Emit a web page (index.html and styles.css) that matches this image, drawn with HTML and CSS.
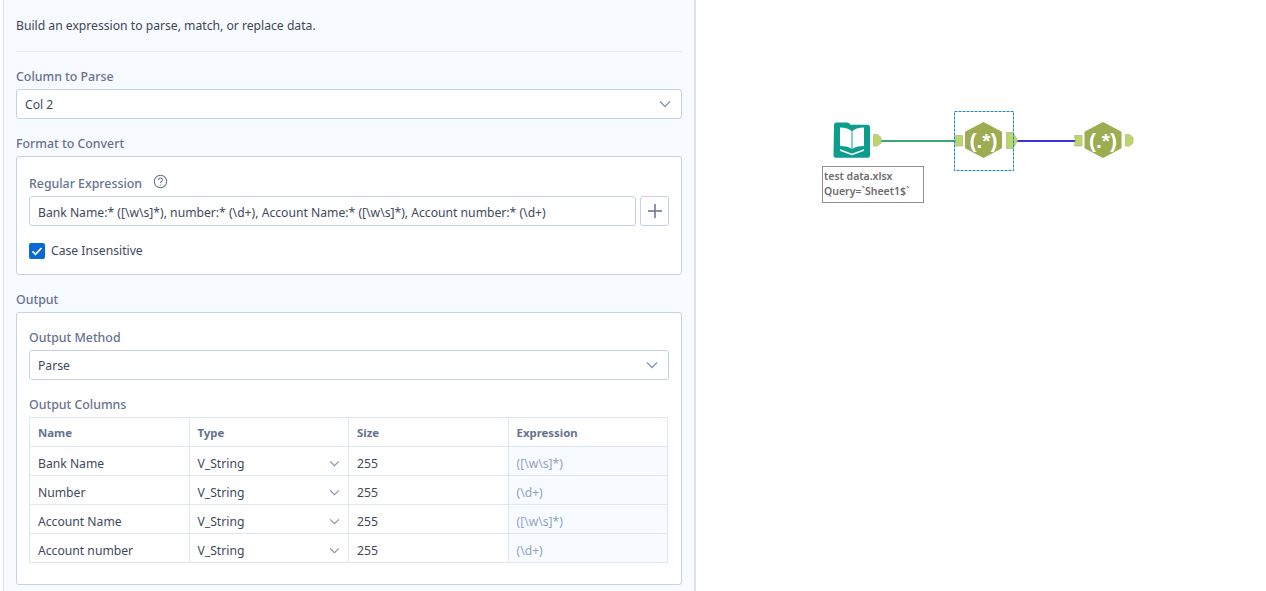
FILE: index.html
```html
<!DOCTYPE html>
<html lang="en">
<head>
<meta charset="utf-8">
<title>RegEx Tool</title>
<link rel="stylesheet" href="styles.css">
</head>
<body>
<div class="app">
  <aside class="panel">
    <p class="intro">Build an expression to parse, match, or replace data.</p>
    <hr class="divider">
    <div class="label label-first">Column to Parse</div>
    <div class="select"><span>Col 2</span><svg class="chev" viewBox="0 0 12 8"><path d="M1 1.5l5 5 5-5"/></svg></div>
    <div class="label label-section">Format to Convert</div>
    <section class="card card-format">
      <div class="label label-help">Regular Expression
        <svg class="help" viewBox="0 0 16 16"><circle cx="8" cy="8" r="6.6"/><path d="M6 6.3a2 2 0 1 1 3.1 1.7c-.7.4-1.1.8-1.1 1.6"/><path d="M8 11.3v.9"/></svg>
      </div>
      <div class="regex-row">
        <div class="input">Bank Name:* ([\w\s]*), number:* (\d+), Account Name:* ([\w\s]*), Account number:* (\d+)</div>
        <button class="add" type="button"><svg viewBox="0 0 14 14"><path d="M7 0v14M0 7h14"/></svg></button>
      </div>
      <label class="check">
        <span class="box"><svg viewBox="0 0 16 16"><path d="M3.500 8.300l3 3 6-6.300"/></svg></span>
        <span class="check-text">Case Insensitive</span>
      </label>
    </section>
    <div class="label label-output">Output</div>
    <section class="card card-output">
      <div class="label label-method">Output Method</div>
      <div class="select"><span>Parse</span><svg class="chev" viewBox="0 0 12 8"><path d="M1 1.5l5 5 5-5"/></svg></div>
      <div class="label label-cols">Output Columns</div>
      <table class="grid">
        <thead>
          <tr><th>Name</th><th>Type</th><th>Size</th><th>Expression</th></tr>
        </thead>
        <tbody>
          <tr><td>Bank Name</td><td><div class="type">V_String<svg class="chev" viewBox="0 0 12 8"><path d="M1 1.5l5 5 5-5"/></svg></div></td><td>255</td><td class="expr">([\w\s]*)</td></tr>
          <tr><td>Number</td><td><div class="type">V_String<svg class="chev" viewBox="0 0 12 8"><path d="M1 1.5l5 5 5-5"/></svg></div></td><td>255</td><td class="expr">(\d+)</td></tr>
          <tr><td>Account Name</td><td><div class="type">V_String<svg class="chev" viewBox="0 0 12 8"><path d="M1 1.5l5 5 5-5"/></svg></div></td><td>255</td><td class="expr">([\w\s]*)</td></tr>
          <tr><td>Account number</td><td><div class="type">V_String<svg class="chev" viewBox="0 0 12 8"><path d="M1 1.5l5 5 5-5"/></svg></div></td><td>255</td><td class="expr">(\d+)</td></tr>
        </tbody>
      </table>
    </section>
  </aside>
  <main class="canvas">
    <svg class="flow" viewBox="0 0 570 591" width="570" height="591">
      <g transform="translate(-696 0)">
        <path class="wire-green" d="M880 141H957"/>
        <path class="wire-blue" d="M1016 141H1079"/>
        <path class="book-bg" d="M834 125a2.500 2.500 0 0 1 2.500-2.500h11a2 2 0 0 1 1.500.7l1.500 1.600h17a2.500 2.500 0 0 1 2.500 2.500v28a2.500 2.500 0 0 1-2.500 2.500h-31.500a2.500 2.500 0 0 1-2.500-2.500z"/>
        <path class="book-page" d="M852 131.500c-2.700-2.800-6.500-4-12-4v18.500c5.500 0 9.300 1 12 3.300 2.700-2.300 6.500-3.300 12-3.300v-18.500c-5.500 0-9.300 1.200-12 4z"/>
        <path class="book-spine" d="M852 131.500v17.500"/>
        <path class="book-foot" d="M840 150l12 4.500 12-4.500"/>
        <path class="anchor" d="M873.500 134.500h4l3.500 3v5.500l-3.500 3h-4z"/>
        <path class="anchor" d="M955 135.500h7.500v10.500H955l.8-5.200z"/>
        <polygon class="hex" points="983.500,122.500 1001.500,132 1001.500,148 983.500,157.500 965.500,148 965.500,132"/>
        <text class="hex-text" x="983.500" y="147.500">(.*)</text>
        <path class="anchor" d="M1006.500 132.500h6.500l4.500 8-4.500 8h-6.500z"/>
        <path class="anchor" d="M1074.500 135.500h7.500v10.500h-7.500l.8-5.200z"/>
        <polygon class="hex" points="1103,122.500 1121,132 1121,148 1103,157.500 1085,148 1085,132"/>
        <text class="hex-text" x="1103" y="147.500">(.*)</text>
        <path class="anchor" d="M1125.500 134.500h4l3.500 3v5.500l-3.500 3h-4z"/>
        <rect class="selection" x="954.500" y="111.500" width="59" height="59"/>
      </g>
    </svg>
    <div class="note">test data.xlsx<br>Query=`Sheet1$`</div>
  </main>
</div>
</body>
</html>
```
FILE: styles.css
```css
* { box-sizing: border-box; }
html, body { margin: 0; height: 591px; overflow: hidden; background: #fff; }
body { font-family: "Noto Sans", "Open Sans", sans-serif; font-size: 12.17px; color: #404a5c; }
.app { display: flex; height: 591px; padding-left: 3px; }
.panel {
  width: 693px; height: 591px; flex: none; overflow: hidden;
  background: #f7faff;
  border-left: 1px solid #dbe4f3; border-right: 2px solid #dbe4f3;
  padding: 0 12px;
}
.intro { margin: 0; padding-top: 17px; height: 51px; line-height: 17px; color: #3d4656; }
.divider { margin: 0; border: 0; border-top: 1px solid #e8edf5; height: 1px; }
.label { font-weight: 500; font-size: 12.35px; color: #66728f; line-height: 17px; }
.label-first { margin-top: 16px; }
.label-section { margin-top: 16px; }
.label-help { margin-top: 0; display: flex; align-items: center; gap: 0; }
.label-output { margin-top: 16px; }
.label-method { margin-top: 0; }
.label-cols { margin-top: 16px; }
.select, .input {
  background: #fff; border: 1px solid #c5d1e6; border-radius: 3px;
  height: 30px; line-height: 29px; color: #404a5c;
}
.select { display: flex; align-items: center; justify-content: space-between; padding: 1px 10px 0 8px; margin-top: 4px; }
.select .chev { margin-top: -1px; }
.chev { width: 12px; height: 8px; fill: none; stroke: #8a97b3; stroke-width: 1.4; }
.card {
  background: #fff; border: 1px solid #c5d1e6; border-radius: 3px; padding: 0 12px;
}
.card-format { height: 119px; margin-top: 4px; padding-top: 18px; }
.card-output { height: 273px; margin-top: 4px; padding-top: 16px; }
.help { width: 15px; height: 15px; margin-left: 11px; margin-top: -4px; fill: none; stroke: #66728f; stroke-width: 1.1; }
.regex-row { display: flex; gap: 4px; margin-top: 4px; }
.input { flex: 1; padding: 1px 8px 0; white-space: nowrap; overflow: hidden; }
.add {
  width: 29px; height: 30px; flex: none; padding: 0; display: flex; align-items: center; justify-content: center;
  background: #fff; border: 1px solid #c5d1e6; border-radius: 3px;
}
.add svg { width: 14px; height: 14px; fill: none; stroke: #66728f; stroke-width: 1.5; }
.check { display: flex; align-items: center; gap: 6px; margin-top: 16px; line-height: 16px; }
.check-text { padding-top: 1px; }
.box { width: 16px; height: 16px; background: #0b69d4; border-radius: 2px; display: block; }
.box svg { display: block; width: 16px; height: 16px; fill: none; stroke: #fff; stroke-width: 1.8; }
.card-output .select { margin-top: 4px; }
.grid { width: 639px; margin-top: 4px; border-collapse: collapse; table-layout: fixed; }
.grid th, .grid td { border: 1px solid #e1e7f2; padding: 0 8px; height: 29px; text-align: left; font-weight: 400; }
.grid td { padding-top: 5px; }
.grid th { font-weight: 700; font-size: 11.4px; color: #66728f; }
.grid td.expr { background: #f7faff; color: #94a3c2; }
.type { display: flex; align-items: center; justify-content: space-between; padding-right: 0; }
.type .chev { width: 11px; height: 7px; }
.canvas { flex: 1; position: relative; overflow: hidden; background: #fff; }
.flow { position: absolute; left: 0; top: 0; }
.wire-green { stroke: #3ba768; stroke-width: 2; fill: none; }
.wire-blue { stroke: #3636e0; stroke-width: 2; fill: none; }
.book-bg { fill: #0d9d8c; }
.book-page { fill: #fff; }
.book-spine { stroke: #0d9d8c; stroke-width: 1; fill: none; }
.book-foot { stroke: #fff; stroke-width: 1.5; fill: none; }
.anchor { fill: #bcd66a; stroke: #a8b58a; stroke-width: 0.7; }
.hex { fill: #9bad50; stroke: #9bad50; stroke-width: 1; stroke-linejoin: round; }
.hex-text { fill: #fff; font-family: "Liberation Sans", sans-serif; font-weight: 700; font-size: 21px; text-anchor: middle; }
.selection { fill: none; stroke: #1a86d8; stroke-width: 1; stroke-dasharray: 3 1; }
.note {
  position: absolute; left: 126px; top: 166px; width: 102px; height: 37px;
  background: #fff; border: 1px solid #8f8f8f;
  padding: 2px 1px; font-size: 10.5px; line-height: 15px; font-weight: 600; color: #6d6d6d; white-space: nowrap;
}
```
